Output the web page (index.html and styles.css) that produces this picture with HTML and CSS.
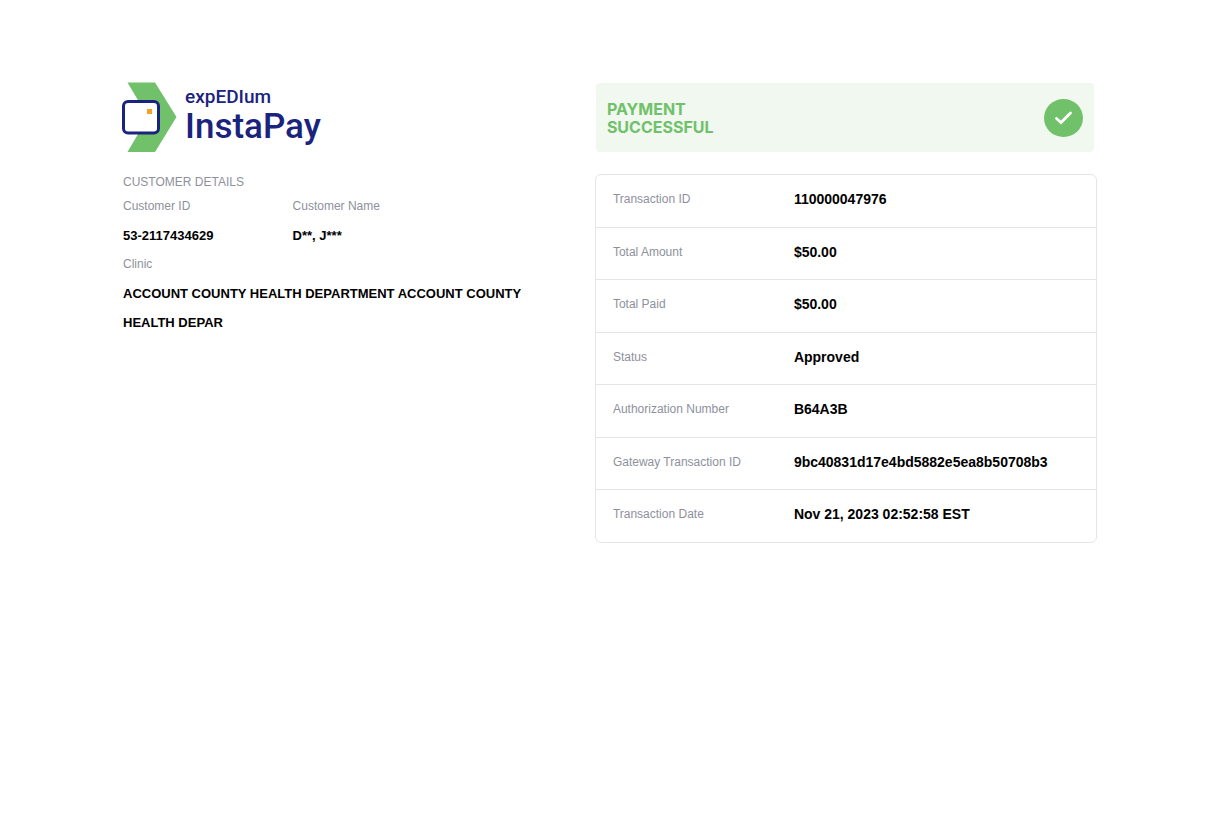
FILE: index.html
```html
<!DOCTYPE html>
<html lang="en">

<head>
    <meta charset="UTF-8">
    <meta name="viewport" content="width=device-width, initial-scale=1.0">
    <title>expEDIum InstaPay - Payment Successful</title>
    <link rel="stylesheet" href="styles.css">
</head>

<body>
    <main class="receipt">
        <!-- Customer -->
        <section class="customer">
            <div class="logo">
                <svg class="logo-mark" width="55" height="70" viewBox="0 0 55 70" aria-hidden="true">
                    <path d="M5.500 0.500H33L54.500 35L33 70H5.500L26 35Z" fill="#70c169" />
                    <rect x="1.500" y="19.500" width="35" height="31.500" rx="4.500" fill="#fff" stroke="#1a237e" stroke-width="3" />
                    <rect x="25" y="27" width="5" height="5" fill="#f7a023" />
                </svg>
                <div class="logo-text">
                    <span class="logo-brand">expEDIum</span>
                    <span class="logo-product">InstaPay</span>
                </div>
            </div>

            <h2>CUSTOMER DETAILS</h2>
            <dl class="details">
                <div class="detail">
                    <dt>Customer ID</dt>
                    <dd>53-2117434629</dd>
                </div>
                <div class="detail">
                    <dt>Customer Name</dt>
                    <dd>D**, J***</dd>
                </div>
                <div class="detail wide">
                    <dt>Clinic</dt>
                    <dd>ACCOUNT COUNTY HEALTH DEPARTMENT ACCOUNT COUNTY HEALTH DEPAR</dd>
                </div>
            </dl>
        </section>

        <!-- Payment -->
        <section class="payment">
            <div class="banner">
                <h1>PAYMENT<br>SUCCESSFUL</h1>
                <svg width="39" height="38" viewBox="0 0 39 38" aria-hidden="true">
                    <ellipse cx="19.5" cy="19" rx="19.5" ry="19" fill="#70c169" />
                    <path d="M12.500 19.500L17 23.500L26.500 14" fill="none" stroke="#fff" stroke-width="2.800" stroke-linecap="round" />
                </svg>
            </div>

            <table class="transaction">
                <tbody>
                    <tr>
                        <th scope="row">Transaction ID</th>
                        <td>110000047976</td>
                    </tr>
                    <tr>
                        <th scope="row">Total Amount</th>
                        <td>$50.00</td>
                    </tr>
                    <tr>
                        <th scope="row">Total Paid</th>
                        <td>$50.00</td>
                    </tr>
                    <tr>
                        <th scope="row">Status</th>
                        <td>Approved</td>
                    </tr>
                    <tr>
                        <th scope="row">Authorization Number</th>
                        <td>B64A3B</td>
                    </tr>
                    <tr>
                        <th scope="row">Gateway Transaction ID</th>
                        <td>9bc40831d17e4bd5882e5ea8b50708b3</td>
                    </tr>
                    <tr>
                        <th scope="row">Transaction Date</th>
                        <td>Nov 21, 2023 02:52:58 EST</td>
                    </tr>
                </tbody>
            </table>
        </section>
    </main>
</body>

</html>
```

FILE: styles.css
```css
/* General Styles */
* {
    box-sizing: border-box;
}

body {
    margin: 0;
    font-family: "Liberation Sans", Arial, sans-serif;
    background: #fff;
    color: #000;
}

.receipt {
    display: grid;
    grid-template-columns: 11fr 13fr;
    column-gap: 48px;
    padding: 82px 126px 40px 122px;
}

/* Logo */
.logo {
    display: flex;
    gap: 8px;
    height: 70px;
    color: #1a237e;
    font-family: Roboto, sans-serif;
    font-weight: 500;
}

.logo-mark {
    flex: none;
}

.logo-text {
    display: flex;
    flex-direction: column;
    padding-top: 3px;
}

.logo-brand {
    font-size: 19px;
    line-height: 23px;
}

.logo-product {
    font-size: 35px;
    line-height: 37px;
}

/* Customer Details */
.customer h2 {
    margin: 21px 0 0;
    font-size: 12px;
    font-weight: 400;
    line-height: 19px;
    color: #8e919c;
}

.customer h2,
.details {
    padding-left: 1px;
}

.details {
    display: grid;
    grid-template-columns: 2fr 3fr;
    margin: 0;
}

.detail.wide {
    grid-column: 1 / -1;
}

.details dt {
    font-size: 12px;
    line-height: 29px;
    color: #8e919c;
}

.details dd {
    margin: 0;
    font-size: 13px;
    font-weight: 700;
    line-height: 29px;
}

/* Payment Banner */
.banner {
    display: flex;
    align-items: center;
    justify-content: space-between;
    height: 69px;
    margin: 1px 3px 22px 1px;
    padding: 0 11px;
    background: #f1f8f0;
    border-radius: 4px;
}

.banner h1 {
    margin: 0;
    font-family: Inter, sans-serif;
    font-size: 16px;
    font-weight: 700;
    line-height: 18px;
    color: #70c169;
}

/* Transaction Table */
.transaction {
    width: 100%;
    border: 1px solid #e4e5e7;
    border-radius: 6px;
    border-spacing: 0;
}

.transaction tr {
    height: 52px;
}

.transaction tr:nth-child(odd) {
    height: 53px;
}

.transaction tr:last-child {
    height: 52px;
}

.transaction th,
.transaction td {
    padding: 0 0 4px;
    border-bottom: 1px solid #e4e5e7;
    text-align: left;
}

.transaction tr:last-child th,
.transaction tr:last-child td {
    border-bottom: none;
}

.transaction th {
    width: 198px;
    padding-left: 17px;
    font-size: 12px;
    font-weight: 400;
    color: #8e919c;
}

.transaction td {
    font-size: 14px;
    font-weight: 700;
}
```
